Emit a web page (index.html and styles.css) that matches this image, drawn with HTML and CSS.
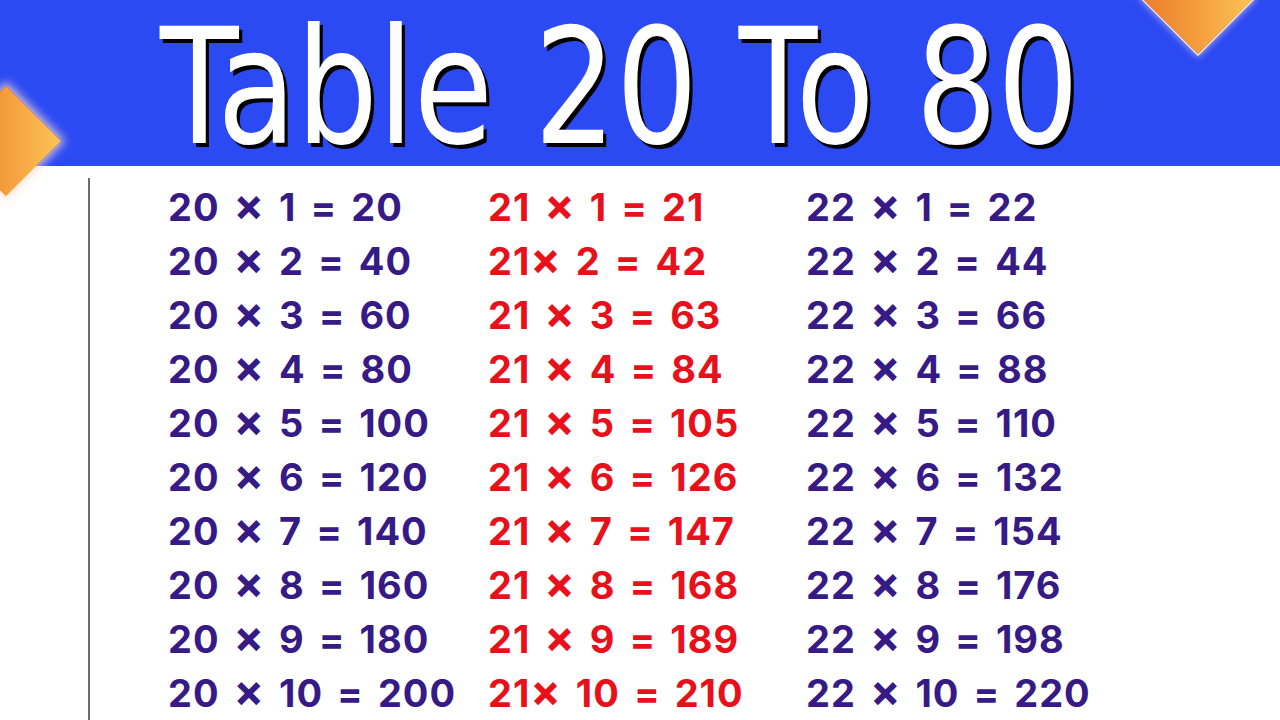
FILE: index.html
```html
<!DOCTYPE html>
<html>
<head>
<meta charset="utf-8">
<link rel="stylesheet" href="styles.css">
</head>
<body>
<div class="page">
  <header class="header">
    <h1 class="title">Table 20 To 80</h1>
    <span class="diamond diamond-left"></span>
    <span class="diamond diamond-right"></span>
  </header>
  <main class="content">
    <div class="col purple">
      <div class="row">20 <span class="x">×</span> 1 = 20</div>
      <div class="row">20 <span class="x">×</span> 2 = 40</div>
      <div class="row">20 <span class="x">×</span> 3 = 60</div>
      <div class="row">20 <span class="x">×</span> 4 = 80</div>
      <div class="row">20 <span class="x">×</span> 5 = 100</div>
      <div class="row">20 <span class="x">×</span> 6 = 120</div>
      <div class="row">20 <span class="x">×</span> 7 = 140</div>
      <div class="row">20 <span class="x">×</span> 8 = 160</div>
      <div class="row">20 <span class="x">×</span> 9 = 180</div>
      <div class="row">20 <span class="x">×</span> 10 = 200</div>
    </div>
    <div class="col red">
      <div class="row">21 <span class="x">×</span> 1 = 21</div>
      <div class="row">21<span class="x">×</span> 2 = 42</div>
      <div class="row">21 <span class="x">×</span> 3 = 63</div>
      <div class="row">21 <span class="x">×</span> 4 = 84</div>
      <div class="row">21 <span class="x">×</span> 5 = 105</div>
      <div class="row">21 <span class="x">×</span> 6 = 126</div>
      <div class="row">21 <span class="x">×</span> 7 = 147</div>
      <div class="row">21 <span class="x">×</span> 8 = 168</div>
      <div class="row">21 <span class="x">×</span> 9 = 189</div>
      <div class="row">21<span class="x">×</span> 10 = 210</div>
    </div>
    <div class="col purple">
      <div class="row">22 <span class="x">×</span> 1 = 22</div>
      <div class="row">22 <span class="x">×</span> 2 = 44</div>
      <div class="row">22 <span class="x">×</span> 3 = 66</div>
      <div class="row">22 <span class="x">×</span> 4 = 88</div>
      <div class="row">22 <span class="x">×</span> 5 = 110</div>
      <div class="row">22 <span class="x">×</span> 6 = 132</div>
      <div class="row">22 <span class="x">×</span> 7 = 154</div>
      <div class="row">22 <span class="x">×</span> 8 = 176</div>
      <div class="row">22 <span class="x">×</span> 9 = 198</div>
      <div class="row">22 <span class="x">×</span> 10 = 220</div>
    </div>
  </main>
</div>
</body>
</html>
```
FILE: styles.css
```css
* { box-sizing: border-box; }
html, body { margin: 0; padding: 0; }
body {
  width: 1280px;
  height: 720px;
  overflow: hidden;
  background: #ffffff;
}
.page {
  display: flex;
  flex-direction: column;
  height: 720px;
}
.header {
  position: relative;
  height: 166px;
  background: #2c4af4;
  display: flex;
  align-items: flex-start;
  padding-left: 160px;
  z-index: 1;
}
.title {
  margin: 0;
  padding-top: 13px;
  font-family: "DejaVu Sans", sans-serif;
  font-weight: normal;
  font-size: 160px;
  line-height: 150px;
  color: #ffffff;
  text-shadow: 4px 4px 0 #000000;
  white-space: nowrap;
  transform: scaleX(0.805);
  transform-origin: left top;
}
.diamond {
  position: absolute;
  width: 78px;
  height: 78px;
  transform: rotate(45deg);
  background: linear-gradient(225deg, #fdc457 0%, #f39a3a 55%, #ee7c2c 100%);
  box-shadow: 0 0 10px 3px rgba(255, 220, 200, 0.8);
}
.diamond-left {
  left: -33px;
  top: 102px;
}
.diamond-right {
  left: 1157px;
  top: -43px;
  width: 82px;
  height: 82px;
  border: 1.5px solid #ffffff;
  box-shadow: 0 0 6px 1px rgba(255, 220, 200, 0.6);
}
.content {
  flex: 1;
  margin-left: 88px;
  margin-top: 12px;
  border-left: 2px solid #6d6d6d;
  padding-left: 78px;
  padding-top: 2px;
  display: grid;
  grid-template-columns: 320px 318px 320px;
  align-content: start;
}
.col {
  display: flex;
  flex-direction: column;
}
.row {
  height: 54px;
  line-height: 54px;
  font-family: "Inter", "DejaVu Sans", sans-serif;
  font-weight: 700;
  font-size: 38px;
  letter-spacing: 1px;
  word-spacing: 4px;
  white-space: nowrap;
}
.x {
  font-size: 45px;
  line-height: 38px;
}
.purple { color: #361a86; }
.red { color: #e8101a; }
```
